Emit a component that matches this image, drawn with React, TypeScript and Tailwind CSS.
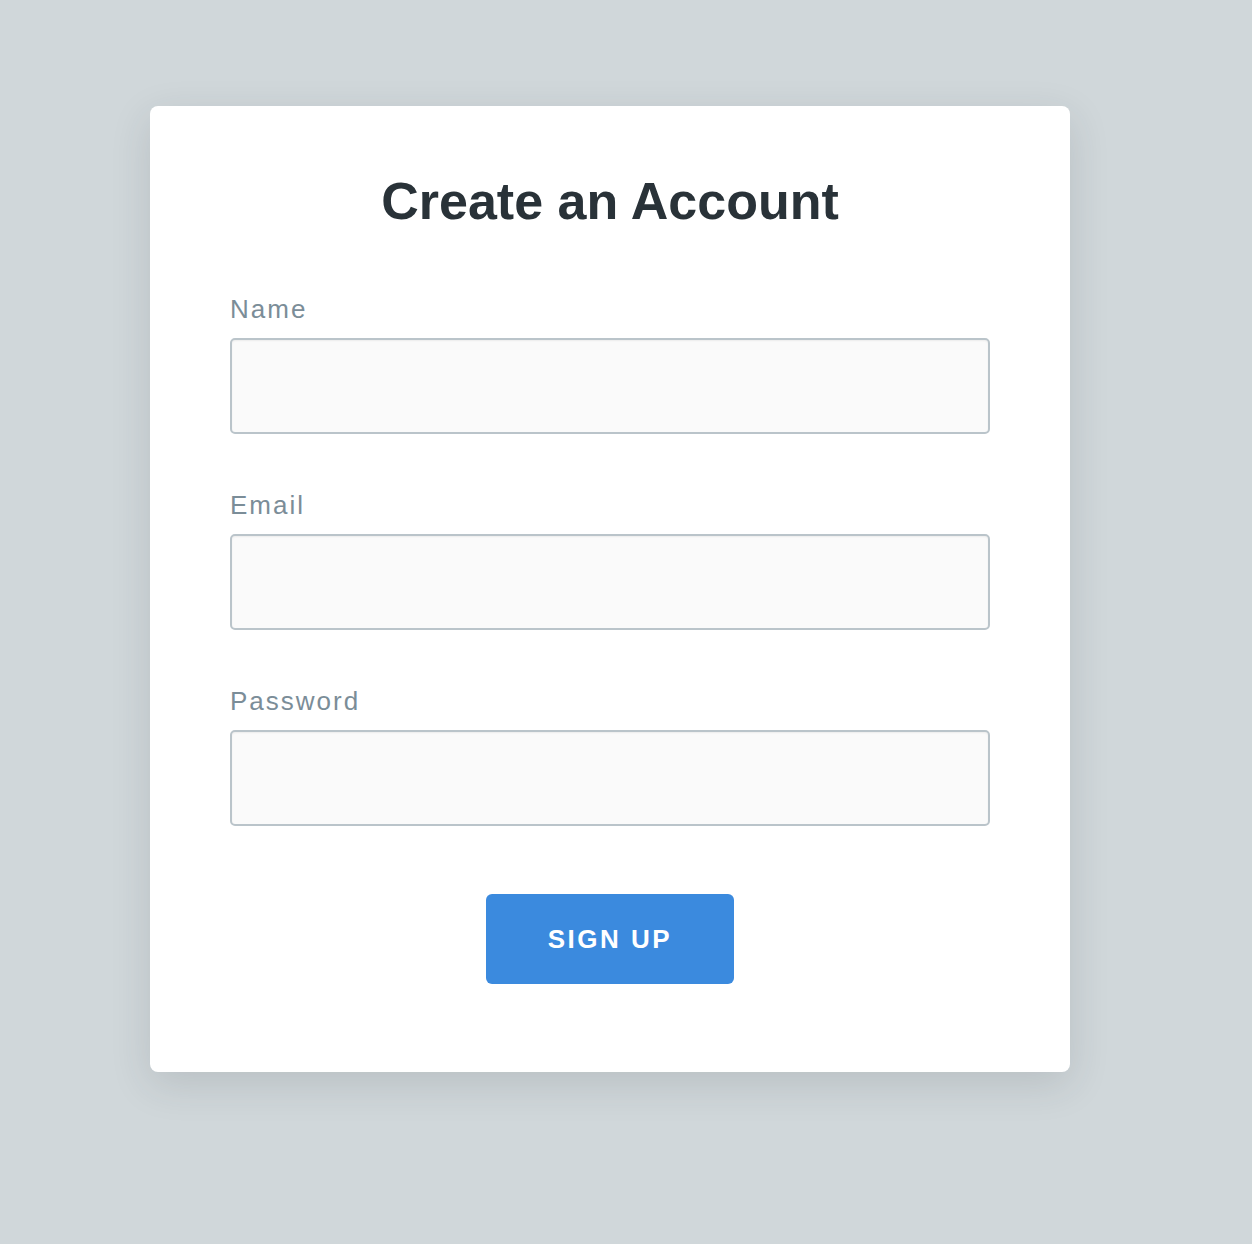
import { useState } from "react";

const fields = [
  { id: "name", label: "Name", type: "text" },
  { id: "email", label: "Email", type: "email" },
  { id: "password", label: "Password", type: "password" },
];

export default function App() {
  const [values, setValues] = useState<Record<string, string>>({});

  return (
    <main
      className="min-h-[1244px] bg-[#d0d7da] pt-[106px] pl-[150px]"
      style={{ fontFamily: '"Liberation Sans", Arial, sans-serif' }}
    >
      <form
        className="w-[920px] bg-white rounded-[8px] px-[80px] pt-[64px] pb-[88px] shadow-[0_12px_40px_rgba(40,50,60,0.14)]"
        onSubmit={(e) => e.preventDefault()}
      >
        <h1 className="text-center text-[52px] leading-[62px] font-bold text-[#293238] mb-[62px]">
          Create an Account
        </h1>

        <div className="flex flex-col gap-[56px]">
          {fields.map((f) => (
            <div key={f.id} className="flex flex-col gap-[14px]">
              <label
                htmlFor={f.id}
                className="text-[26px] leading-[30px] tracking-[2px] text-[#7b8d98]"
              >
                {f.label}
              </label>
              <input
                id={f.id}
                type={f.type}
                value={values[f.id] || ""}
                onChange={(e) => setValues({ ...values, [f.id]: e.target.value })}
                className="h-[96px] w-full rounded-[5px] border-2 border-[#bac4ca] bg-[#fafafa] px-4 text-[24px] shadow-[inset_0_1px_2px_rgba(0,0,0,0.06)] outline-none"
              />
            </div>
          ))}
        </div>

        <div className="flex justify-center mt-[68px]">
          <button
            type="submit"
            className="w-[248px] h-[90px] rounded-[6px] bg-[#3b8ade] text-white text-[26px] font-bold tracking-[2.5px] uppercase"
          >
            Sign up
          </button>
        </div>
      </form>
    </main>
  );
}
